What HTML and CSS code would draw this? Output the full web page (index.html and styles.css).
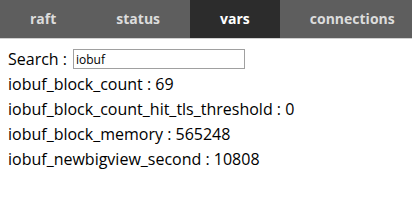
FILE: index.html
```html
<!DOCTYPE html>
<html lang="en">
<head>
    <meta charset="UTF-8">
    <title>vars</title>
    <link rel="stylesheet" href="styles.css">
</head>
<body>
    <ul class="tabs">
        <li class="tab">raft</li>
        <li class="tab">status</li>
        <li class="tab active">vars</li>
        <li class="tab">connections</li>
    </ul>
    <div class="content">
        <div class="search">
            Search : <input type="text" class="search-box" value="iobuf">
        </div>
        <div class="var">iobuf_block_count : 69</div>
        <div class="var">iobuf_block_count_hit_tls_threshold : 0</div>
        <div class="var">iobuf_block_memory : 565248</div>
        <div class="var">iobuf_newbigview_second : 10808</div>
    </div>
</body>
</html>
```

FILE: styles.css
```css
body {
    margin: 0;
    font-family: "Open Sans", Arial, sans-serif;
    background: #fff;
    color: #000;
    overflow: hidden;
}

.tabs {
    display: flex;
    margin: 0;
    padding: 0;
    list-style: none;
    height: 38px;
    background-color: #5e5e5e;
    border-bottom: 1px solid #d0d0d0;
    white-space: nowrap;
}

.tab {
    flex: none;
    padding: 0 30px;
    line-height: 38px;
    font-size: 14px;
    font-weight: bold;
    color: #dcdcdc;
}

.tab.active {
    background-color: #2c2c2c;
    color: #fff;
}

.content {
    padding: 9px 8px;
    font-size: 16px;
}

.search {
    display: flex;
    align-items: center;
    height: 22px;
    margin-bottom: 2px;
}

.search-box {
    width: 166px;
    height: 16px;
    margin-left: 6px;
    padding: 1px 2px;
    border: 1px solid #a0a0a0;
    font-family: "Open Sans", Arial, sans-serif;
    font-size: 12px;
}

.var {
    line-height: 25px;
}
```
